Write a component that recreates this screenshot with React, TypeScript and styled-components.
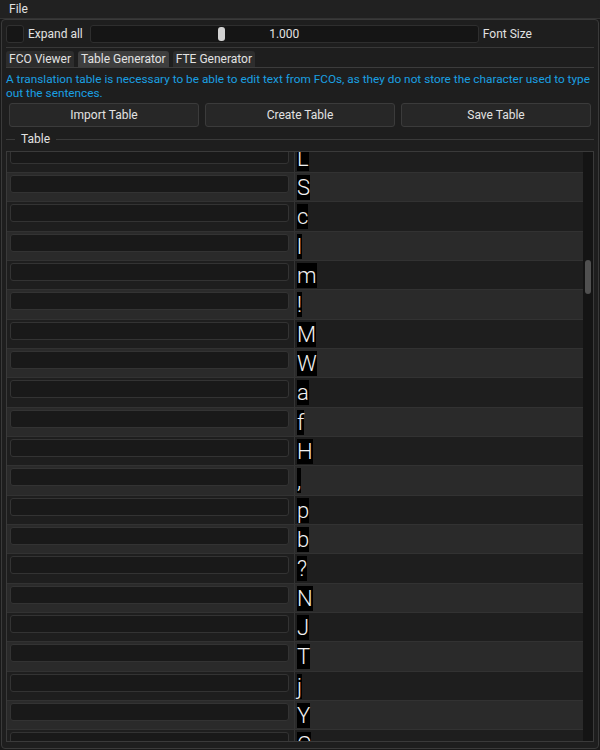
import React from "react";
import styled, { createGlobalStyle } from "styled-components";

const Global = createGlobalStyle`
  html, body { margin: 0; padding: 0; background: #191919; }
  body {
    font-family: Roboto, "Liberation Sans", sans-serif;
    font-size: 12px;
    line-height: 14px;
    color: #e2e2e2;
  }
  * { box-sizing: border-box; }
`;

const Screen = styled.div`
  width: 600px;
  height: 750px;
  display: flex;
  flex-direction: column;
  background: #191919;
  overflow: hidden;
`;

const MenuBar = styled.div`
  flex: none;
  height: 19px;
  display: flex;
  align-items: center;
  padding-left: 9px;
  background: #212121;
  border-bottom: 1px solid #333;
`;

const Window = styled.div`
  flex: 1;
  min-height: 0;
  margin: 0 1px 1px 1px;
  border: 1px solid #3a3a3a;
  border-radius: 4px;
  background: #1e1e1e;
  padding: 5px 4px 6px 4px;
  display: flex;
  flex-direction: column;
`;

const Toolbar = styled.div`
  display: flex;
  align-items: center;
  gap: 4px;
  height: 18px;
`;

const Checkbox = styled.div`
  width: 18px;
  height: 18px;
  border-radius: 3px;
  background: #161616;
  border: 1px solid #303030;
`;

const Label = styled.span`
  white-space: nowrap;
`;

const Slider = styled.div`
  position: relative;
  margin-left: 3px;
  width: 389px;
  height: 18px;
  border-radius: 3px;
  background: #151515;
  border: 1px solid #2e2e2e;
  display: flex;
  align-items: center;
  justify-content: center;
`;

const Grab = styled.div`
  position: absolute;
  top: 1px;
  width: 7px;
  height: 14px;
  border-radius: 3px;
  background: #d2d2d2;
`;

const Separator = styled.div`
  height: 1px;
  background: #383838;
  margin: 4px 0 3px 0;
`;

const TabBar = styled.div`
  display: flex;
  gap: 4px;
  height: 17px;
  border-bottom: 1px solid #3c3c3c;
`;

const Tab = styled.div<{ $active?: boolean }>`
  height: 16px;
  line-height: 16px;
  padding: 0 3px;
  border-radius: 3px 3px 0 0;
  background: ${(p) => (p.$active ? "#3e3e3e" : "#2d2d2d")};
  white-space: nowrap;
`;

const Info = styled.div`
  margin-top: 4px;
  color: #1aa0e2;
  font-size: 11.8px;
  line-height: 14px;
`;

const ButtonRow = styled.div`
  margin-top: 3px;
  display: grid;
  grid-template-columns: repeat(3, 1fr);
  gap: 6px;
  padding: 0 3px;
`;

const Button = styled.div`
  height: 24px;
  border-radius: 3px;
  background: #272727;
  border: 1px solid #3b3b3b;
  display: flex;
  align-items: center;
  justify-content: center;
`;

const SectionHeader = styled.div`
  margin-top: 5px;
  height: 14px;
  display: flex;
  align-items: center;
  gap: 6px;
`;

const Line = styled.div<{ $grow?: boolean }>`
  height: 1px;
  background: #3a3a3a;
  width: ${(p) => (p.$grow ? "auto" : "9px")};
  flex: ${(p) => (p.$grow ? "1" : "none")};
`;

const Table = styled.div`
  margin-top: 5px;
  flex: 1;
  min-height: 0;
  border: 1px solid #3a3a3a;
  display: flex;
  overflow: hidden;
`;

const Viewport = styled.div`
  flex: 1;
  min-width: 0;
  overflow: hidden;
`;

const Rows = styled.div`
  margin-top: -9.33px;
`;

const Row = styled.div<{ $odd: boolean }>`
  height: 29.33px;
  display: flex;
  border-top: 1px solid #323232;
  background: ${(p) => (p.$odd ? "#2a2a2a" : "#1e1e1e")};
`;

const InputCell = styled.div`
  flex: none;
  width: 288px;
  padding: 2px 5px 0 3px;
  border-right: 1px solid #343434;
`;

const Input = styled.div`
  width: 279px;
  height: 18px;
  border-radius: 3px;
  background: #191919;
  border: 1px solid #333;
`;

const CharCell = styled.div`
  flex: 1;
  padding: 2px 0 0 2px;
  overflow: hidden;
`;

const Glyph = styled.span`
  display: inline-block;
  height: 25px;
  line-height: 26px;
  font-size: 22px;
  font-weight: 300;
  color: #f2f2f2;
  background: #000;
  vertical-align: top;
`;

const ScrollTrack = styled.div`
  flex: none;
  width: 10px;
  background: #141414;
  padding: 0 2px;
`;

const ScrollGrab = styled.div`
  margin-top: 108px;
  width: 6px;
  height: 34px;
  border-radius: 3px;
  background: #505050;
`;

const chars = ["L", "S", "c", "l", "m", "!", "M", "W", "a", "f", "H", ",", "p", "b", "?", "N", "J", "T", "j", "Y", "C"];

export default function App() {
  const value = 1.0;
  const min = 0.5;
  const max = 2.0;
  const grabLeft = 2 + ((value - min) / (max - min)) * 376;
  return (
    <Screen>
      <Global />
      <MenuBar>File</MenuBar>
      <Window>
        <Toolbar>
          <Checkbox />
          <Label>Expand all</Label>
          <Slider>
            <Grab style={{ left: grabLeft }} />
            <span>{value.toFixed(3)}</span>
          </Slider>
          <Label>Font Size</Label>
        </Toolbar>
        <Separator />
        <TabBar>
          <Tab>FCO Viewer</Tab>
          <Tab $active>Table Generator</Tab>
          <Tab>FTE Generator</Tab>
        </TabBar>
        <Info>
          A translation table is necessary to be able to edit text from FCOs, as they do not store the character used to type out the sentences.
        </Info>
        <ButtonRow>
          <Button>Import Table</Button>
          <Button>Create Table</Button>
          <Button>Save Table</Button>
        </ButtonRow>
        <SectionHeader>
          <Line />
          <span>Table</span>
          <Line $grow />
        </SectionHeader>
        <Table>
          <Viewport>
            <Rows>
              {chars.map((c, i) => (
                <Row key={i} $odd={i % 2 === 1}>
                  <InputCell>
                    <Input />
                  </InputCell>
                  <CharCell>
                    <Glyph>{c}</Glyph>
                  </CharCell>
                </Row>
              ))}
            </Rows>
          </Viewport>
          <ScrollTrack>
            <ScrollGrab />
          </ScrollTrack>
        </Table>
      </Window>
    </Screen>
  );
}
